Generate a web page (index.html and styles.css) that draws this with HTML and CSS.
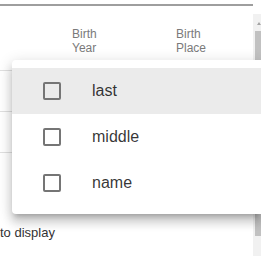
FILE: index.html
```html
<!DOCTYPE html>
<html lang="en">
<head>
    <meta charset="UTF-8">
    <title>Columns</title>
    <link rel="stylesheet" href="styles.css">
</head>
<body>
    <div class="rule"></div>

    <div class="panel">
        <div class="table">
            <div class="head">
                <span class="col">Birth<br>Year</span>
                <span class="col">Birth<br>Place</span>
            </div>
            <div class="row"></div>
            <div class="row"></div>
            <div class="row"></div>
            <div class="empty">to display</div>
        </div>
        <div class="scrollbar">
            <div class="arrow"></div>
            <div class="thumb"></div>
        </div>
    </div>

    <!-- column chooser popup -->
    <ul class="menu">
        <li class="item selected"><span class="box"></span>last</li>
        <li class="item"><span class="box"></span>middle</li>
        <li class="item"><span class="box"></span>name</li>
    </ul>
</body>
</html>
```

FILE: styles.css
```css
body {
    margin: 0;
    font-family: "Liberation Sans", Arial, sans-serif;
    background: #fff;
    overflow: hidden;
}
.rule {
    width: 253px;
    height: 2px;
    margin-top: 4px;
    background: #9e9e9e;
}
.panel {
    display: flex;
    margin-top: 8px;
    height: 242px;
}
.table {
    flex: 1;
    min-width: 0;
    overflow: hidden;
}
.head {
    display: flex;
    padding: 13px 0 0 72px;
    height: 43px;
    font-size: 12px;
    line-height: 14px;
    color: #7a7a7a;
}
.col {
    flex: 0 0 104px;
}
.row {
    height: 41px;
    border-top: 1px solid #e0e0e0;
    box-sizing: border-box;
}
.empty {
    padding-top: 32px;
    font-size: 13px;
    white-space: nowrap;
    color: #333;
}
.scrollbar {
    flex: 0 0 8px;
    background: #f1f1f1;
    position: relative;
}
.arrow {
    position: absolute;
    left: 4px;
    top: 8px;
    width: 0;
    height: 0;
    border-left: 2px solid transparent;
    border-right: 2px solid transparent;
    border-bottom: 3px solid #a3a3a3;
}
.thumb {
    position: absolute;
    left: 2px;
    right: 0;
    top: 17px;
    height: 205px;
    background: #c1c1c1;
}
.menu {
    position: absolute;
    left: 12px;
    right: 0;
    top: 60px;
    margin: 0;
    padding: 8px 0;
    list-style: none;
    background: #fff;
    border-radius: 4px 0 0 4px;
    box-shadow: 0 5px 5px -3px rgba(0,0,0,0.2), 0 8px 10px 1px rgba(0,0,0,0.14), 0 3px 14px 2px rgba(0,0,0,0.12);
}
.item {
    display: flex;
    align-items: center;
    height: 46px;
    padding-left: 31px;
    font-size: 16px;
    color: rgba(0,0,0,0.8);
}
.item.selected {
    background: #ebebeb;
}
.box {
    width: 18px;
    height: 18px;
    box-sizing: border-box;
    border: 2px solid #757575;
    border-radius: 2px;
    margin-right: 31px;
}
```
